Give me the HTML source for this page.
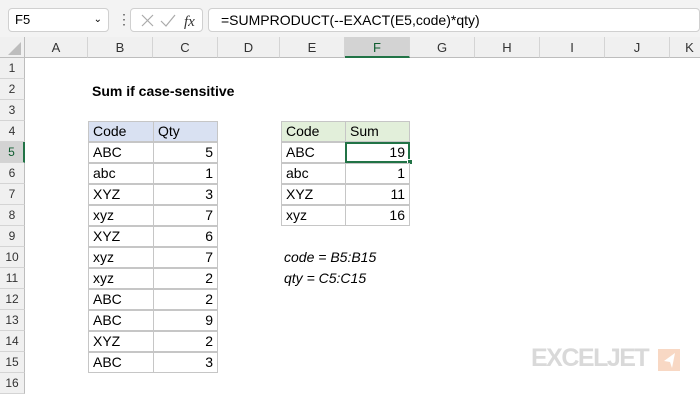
<!DOCTYPE html><html><head><style>
*{margin:0;padding:0;box-sizing:border-box}
body{width:700px;height:400px;overflow:hidden;background:#fff;font-family:"Liberation Sans",sans-serif;position:relative}
.a{position:absolute}
.ch{position:absolute;top:37px;height:21px;border-right:1px solid #d4d4d4;border-bottom:1px solid #bdbdbd;background:#f0f0f0;font-size:13px;color:#333;text-align:center;line-height:21px}
.rh{position:absolute;left:0;width:25px;height:21px;border-bottom:1px solid #d4d4d4;border-right:1px solid #bdbdbd;background:#f0f0f0;font-size:12px;color:#333;text-align:center;line-height:21px}
.c{position:absolute;height:21px;border:1px solid #c6c6c6;font-size:14px;line-height:19px;padding:0 4px;color:#000}
.r{text-align:right}
</style></head><body>
<div class="a" style="left:0;top:0;width:700px;height:37px;background:#f3f3f3"></div>
<div class="a" style="left:8px;top:8px;width:101px;height:24px;background:#fff;border:1px solid #d0d0d0;border-radius:4px;font-size:13px;line-height:22px;padding-left:6px">F5<span style="position:absolute;right:6px;top:0;font-size:10px">&#8964;</span></div>
<div class="a" style="left:117px;top:12px;font-size:14px;color:#555;line-height:14px">&#8942;</div>
<div class="a" style="left:130px;top:8px;width:73px;height:24px;background:#fff;border:1px solid #d0d0d0;border-radius:4px">
<svg width="73" height="24"><path d="M11 6l11 11M22 6L11 17" stroke="#aaa" stroke-width="1.2"/><path d="M30 12l5 5 9-11" stroke="#aaa" stroke-width="1.2" fill="none"/><text x="53" y="17" font-family="Liberation Serif" font-style="italic" font-size="15" fill="#333">fx</text></svg></div>
<div class="a" style="left:208px;top:8px;width:492px;height:24px;background:#fff;border:1px solid #d0d0d0;border-radius:4px;font-size:14px;line-height:22px;padding-left:12px">=SUMPRODUCT(--EXACT(E5,code)*qty)</div>
<div class="a" style="left:0;top:37px;width:25px;height:21px;background:#f0f0f0;border-right:1px solid #bdbdbd;border-bottom:1px solid #bdbdbd"><svg width="25" height="21"><path d="M21 5L21 18 8 18Z" fill="#bdbdbd"/></svg></div>
<div class="ch" style="left:25px;width:63px">A</div><div class="ch" style="left:88px;width:65px">B</div><div class="ch" style="left:153px;width:65px">C</div><div class="ch" style="left:218px;width:62px">D</div><div class="ch" style="left:280px;width:65px">E</div><div class="ch" style="left:345px;width:65px;background:#d3d3d3;border-bottom:2px solid #217346;color:#0e5c2f">F</div><div class="ch" style="left:410px;width:65px">G</div><div class="ch" style="left:475px;width:65px">H</div><div class="ch" style="left:540px;width:65px">I</div><div class="ch" style="left:605px;width:65px">J</div><div class="ch" style="left:670px;width:40px">K</div>
<div class="rh" style="top:58px">1</div><div class="rh" style="top:79px">2</div><div class="rh" style="top:100px">3</div><div class="rh" style="top:121px">4</div><div class="rh" style="top:142px;background:#d3d3d3;border-right:2px solid #217346;color:#0e5c2f">5</div><div class="rh" style="top:163px">6</div><div class="rh" style="top:184px">7</div><div class="rh" style="top:205px">8</div><div class="rh" style="top:226px">9</div><div class="rh" style="top:247px">10</div><div class="rh" style="top:268px">11</div><div class="rh" style="top:289px">12</div><div class="rh" style="top:310px">13</div><div class="rh" style="top:331px">14</div><div class="rh" style="top:352px">15</div><div class="rh" style="top:373px">16</div>
<div class="a" style="left:92px;top:82px;font-size:14px;font-weight:bold;line-height:19px">Sum if case-sensitive</div>
<div class="c" style="left:88px;top:121px;width:66px;background:#d9e1f2">Code</div><div class="c" style="left:153px;top:121px;width:65px;background:#d9e1f2">Qty</div>
<div class="c" style="left:88px;top:142px;width:66px">ABC</div><div class="c r" style="left:153px;top:142px;width:65px">5</div>
<div class="c" style="left:88px;top:163px;width:66px">abc</div><div class="c r" style="left:153px;top:163px;width:65px">1</div>
<div class="c" style="left:88px;top:184px;width:66px">XYZ</div><div class="c r" style="left:153px;top:184px;width:65px">3</div>
<div class="c" style="left:88px;top:205px;width:66px">xyz</div><div class="c r" style="left:153px;top:205px;width:65px">7</div>
<div class="c" style="left:88px;top:226px;width:66px">XYZ</div><div class="c r" style="left:153px;top:226px;width:65px">6</div>
<div class="c" style="left:88px;top:247px;width:66px">xyz</div><div class="c r" style="left:153px;top:247px;width:65px">7</div>
<div class="c" style="left:88px;top:268px;width:66px">xyz</div><div class="c r" style="left:153px;top:268px;width:65px">2</div>
<div class="c" style="left:88px;top:289px;width:66px">ABC</div><div class="c r" style="left:153px;top:289px;width:65px">2</div>
<div class="c" style="left:88px;top:310px;width:66px">ABC</div><div class="c r" style="left:153px;top:310px;width:65px">9</div>
<div class="c" style="left:88px;top:331px;width:66px">XYZ</div><div class="c r" style="left:153px;top:331px;width:65px">2</div>
<div class="c" style="left:88px;top:352px;width:66px">ABC</div><div class="c r" style="left:153px;top:352px;width:65px">3</div>
<div class="c" style="left:281px;top:121px;width:65px;background:#e2efda">Code</div><div class="c" style="left:345px;top:121px;width:65px;background:#e2efda">Sum</div>
<div class="c" style="left:281px;top:142px;width:65px">ABC</div><div class="c r" style="left:345px;top:142px;width:65px;border:2px solid #217346;line-height:17px;padding-right:3px">19</div>
<div class="a" style="left:407px;top:159px;width:6px;height:6px;background:#217346;border:1px solid #fff"></div>
<div class="c" style="left:281px;top:163px;width:65px">abc</div><div class="c r" style="left:345px;top:163px;width:65px">1</div>
<div class="c" style="left:281px;top:184px;width:65px">XYZ</div><div class="c r" style="left:345px;top:184px;width:65px">11</div>
<div class="c" style="left:281px;top:205px;width:65px">xyz</div><div class="c r" style="left:345px;top:205px;width:65px">16</div>
<div class="a" style="left:284px;top:249px;font-size:14px;font-style:italic">code = B5:B15</div>
<div class="a" style="left:284px;top:270px;font-size:14px;font-style:italic">qty = C5:C15</div>
<div class="a" style="left:531px;top:345px;font-size:25px;font-weight:bold;color:#d9d9d9;letter-spacing:-1.5px;line-height:26px">EXCELJET</div>
<div class="a" style="left:658px;top:349px;width:22px;height:22px;background:#f8d8c4"><svg width="22" height="22"><path d="M17 4L6 12 12 13 14 19Z" fill="#fff"/></svg></div>
</body></html>
